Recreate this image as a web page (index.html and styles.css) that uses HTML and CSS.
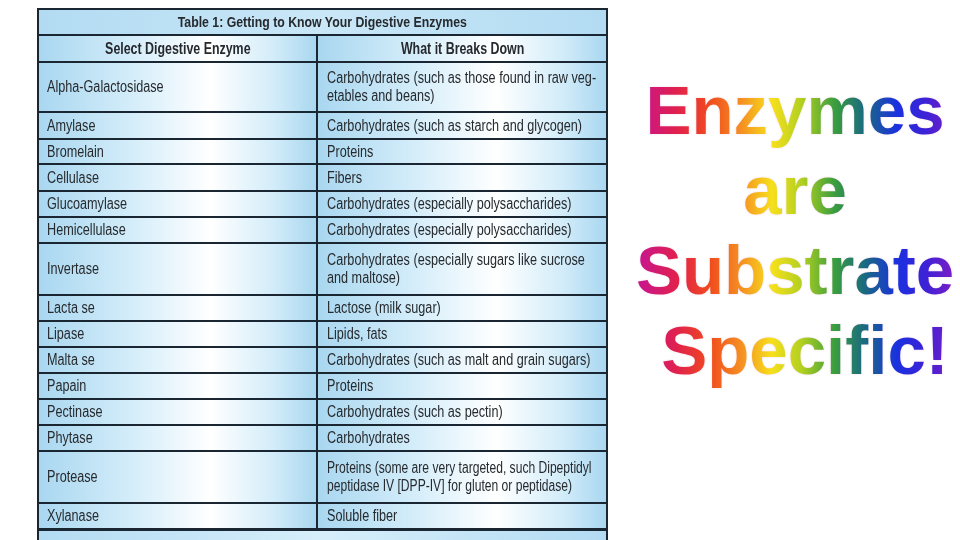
FILE: index.html
```html
<!DOCTYPE html>
<html>
<head>
<meta charset="utf-8">
<link rel="stylesheet" href="styles.css">
</head>
<body>
<div class="page">
  <table class="enz">
    <colgroup><col class="k1"><col class="k2"></colgroup>
    <tr class="title"><th colspan="2"><span class="t">Table 1: Getting to Know Your Digestive Enzymes</span></th></tr>
    <tr class="head"><th class="c1"><span class="t">Select Digestive Enzyme</span></th><th class="c2"><span class="t">What it Breaks Down</span></th></tr>
    <tr class="tall"><td class="c1"><span class="t">Alpha-Galactosidase</span></td><td class="c2"><span class="t">Carbohydrates (such as those found in raw veg-<br>etables and beans)</span></td></tr>
    <tr class="r27"><td class="c1"><span class="t">Amylase</span></td><td class="c2"><span class="t">Carbohydrates (such as starch and glycogen)</span></td></tr>
    <tr class="r25"><td class="c1"><span class="t">Bromelain</span></td><td class="c2"><span class="t">Proteins</span></td></tr>
    <tr class="r27"><td class="c1"><span class="t">Cellulase</span></td><td class="c2"><span class="t">Fibers</span></td></tr>
    <tr class="r26"><td class="c1"><span class="t">Glucoamylase</span></td><td class="c2"><span class="t">Carbohydrates (especially polysaccharides)</span></td></tr>
    <tr class="r26"><td class="c1"><span class="t">Hemicellulase</span></td><td class="c2"><span class="t">Carbohydrates (especially polysaccharides)</span></td></tr>
    <tr class="tall2"><td class="c1"><span class="t">Invertase</span></td><td class="c2"><span class="t">Carbohydrates (especially sugars like sucrose<br>and maltose)</span></td></tr>
    <tr class="r26"><td class="c1"><span class="t">Lacta se</span></td><td class="c2"><span class="t">Lactose (milk sugar)</span></td></tr>
    <tr class="r26"><td class="c1"><span class="t">Lipase</span></td><td class="c2"><span class="t">Lipids, fats</span></td></tr>
    <tr class="r26"><td class="c1"><span class="t">Malta se</span></td><td class="c2"><span class="t">Carbohydrates (such as malt and grain sugars)</span></td></tr>
    <tr class="r26"><td class="c1"><span class="t">Papain</span></td><td class="c2"><span class="t">Proteins</span></td></tr>
    <tr class="r26"><td class="c1"><span class="t">Pectinase</span></td><td class="c2"><span class="t">Carbohydrates (such as pectin)</span></td></tr>
    <tr class="r26"><td class="c1"><span class="t">Phytase</span></td><td class="c2"><span class="t">Carbohydrates</span></td></tr>
    <tr class="tall2"><td class="c1"><span class="t">Protease</span></td><td class="c2"><span class="t tight">Proteins (some are very targeted, such Dipeptidyl<br>peptidase IV [DPP-IV] for gluten or peptidase)</span></td></tr>
    <tr class="r26"><td class="c1"><span class="t">Xylanase</span></td><td class="c2"><span class="t">Soluble fiber</span></td></tr>
    <tr class="foot"><td colspan="2"></td></tr>
  </table>
  <div class="slogan">
    <div class="line">Enzymes</div>
    <div class="line">are</div>
    <div class="line">Substrate</div>
    <div class="line shift">Specific!</div>
  </div>
</div>
</body>
</html>
```
FILE: styles.css
```css
html, body {
  margin: 0;
  padding: 0;
  background: #ffffff;
  overflow: hidden;
}
.page {
  width: 960px;
  height: 540px;
  display: flex;
  align-items: flex-start;
  padding: 8px 0 0 37px;
  box-sizing: border-box;
}
.enz {
  width: 571px;
  flex: none;
  border-collapse: collapse;
  border: 2px solid #1b2633;
  font-family: "Liberation Sans", Arial, sans-serif;
  font-size: 16px;
  color: #262a2e;
  table-layout: fixed;
}
.enz .k1 { width: 279px; }
.enz .k2 { width: 290px; }
.enz td, .enz th {
  border: 2px solid #1b2633;
  padding: 0 8px;
  text-align: left;
  vertical-align: middle;
  line-height: 18px;
  overflow: hidden;
  background: linear-gradient(90deg, #a9d7f0 0%, #d6eefa 35%, #ffffff 62%, #d2ecf9 85%, #a9d7f0 100%);
}
.t {
  display: inline-block;
  white-space: nowrap;
  transform: scaleX(0.79);
  transform-origin: 0 50%;
}
.t.tight { transform: scaleX(0.755); }
.enz .c2 { padding-left: 9px; }
.enz th {
  font-weight: bold;
  text-align: center;
}
.enz th .t {
  transform: scaleX(0.775);
  transform-origin: 50% 50%;
}
.title th {
  height: 24px;
  padding: 0;
  font-size: 15px;
  background: linear-gradient(90deg, #b2dbf2 0%, #c9e7f7 50%, #b2dbf2 100%);
}
.enz .title th .t { transform: scaleX(0.82); }
.head th { height: 25px; }
.tall td { height: 48px; }
.tall2 td { height: 50px; }
.r25 td { height: 23px; }
.r26 td { height: 24px; }
.r27 td { height: 25px; }
.foot td {
  height: 20px;
  border-top-width: 3px;
  background: linear-gradient(90deg, #b2dbf2 0%, #d6eefa 50%, #b2dbf2 100%);
}
.slogan {
  width: 330px;
  margin-left: 22px;
  margin-top: 63px;
  font-family: "Liberation Sans", Arial, sans-serif;
  font-weight: bold;
  font-size: 69px;
  line-height: 80px;
  text-align: center;
}
.line {
  background: linear-gradient(90deg,
    #c8168c 3%,
    #e0204e 14%,
    #f04a1e 24%,
    #f59222 34%,
    #f6e01c 43%,
    #b2d020 52%,
    #3a9e3e 62%,
    #1a6a80 71%,
    #1a30e0 81%,
    #3f22d6 90%,
    #8a1cc0 100%);
  -webkit-background-clip: text;
  background-clip: text;
  color: transparent;
  filter: drop-shadow(0 0 1px #f6dbe8);
}
.shift { padding-left: 20px; }
```
